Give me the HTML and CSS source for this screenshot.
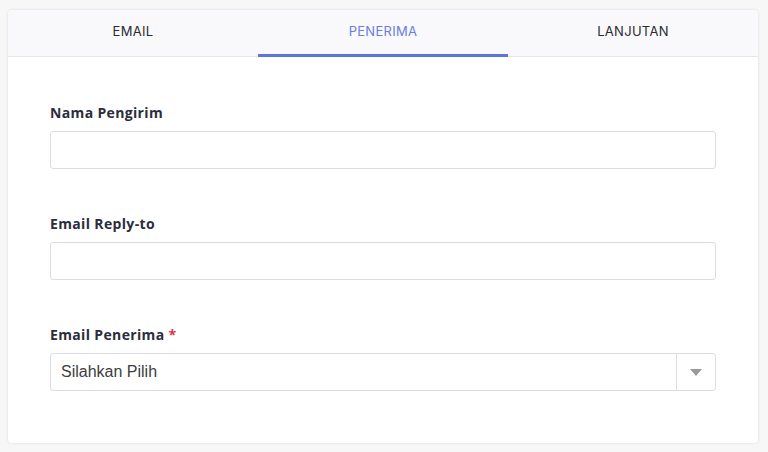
FILE: index.html
```html
<!DOCTYPE html>
<html lang="id">
  <head>
    <meta charset="UTF-8" />
    <meta name="viewport" content="width=device-width, initial-scale=1.0" />
    <title>Pengaturan Email</title>
    <link rel="stylesheet" href="styles.css">
  </head>
  <body>
    <div class="card">
      <!-- tab navigasi -->
      <div class="tabs">
        <div class="tab">EMAIL</div>
        <div class="tab active">PENERIMA</div>
        <div class="tab">LANJUTAN</div>
      </div>
      <!-- isi form penerima -->
      <form class="panel">
        <div class="group">
          <label for="sender">Nama Pengirim</label>
          <input type="text" id="sender" class="input" />
        </div>
        <div class="group">
          <label for="reply">Email Reply-to</label>
          <input type="text" id="reply" class="input" />
        </div>
        <div class="group">
          <label>Email Penerima <span class="req">*</span></label>
          <div class="select">
            <span class="select-text">Silahkan Pilih</span>
            <span class="select-arrow"><i></i></span>
          </div>
        </div>
      </form>
    </div>
  </body>
</html>
```

FILE: styles.css
```css
body {
  margin: 0;
  padding: 10px 10px 9px 8px;
  background-color: #f7f7f7;
  font-family: Inter, "Noto Sans", sans-serif;
}

/* kartu utama */
.card {
  background-color: #fff;
  border-radius: 4px;
  box-shadow: 0 0 3px rgba(0, 0, 0, 0.12);
  overflow: hidden;
}

/* tab */
.tabs {
  display: flex;
  background-color: #f9f9fb;
  border-bottom: 1px solid #e6e6ec;
}

.tab {
  flex: 1;
  height: 47px;
  box-sizing: border-box;
  display: flex;
  justify-content: center;
  align-items: center;
  padding-bottom: 2px;
  font-size: 13px;
  letter-spacing: 0.3px;
  color: #2b2b30;
  border-bottom: 3px solid transparent;
  margin-bottom: -1px;
}

.tab.active {
  color: #6b7de0;
  border-bottom-color: #5f73dc;
}

/* form */
.panel {
  padding: 46px 42px 7px;
}

.group {
  display: flex;
  flex-direction: column;
  margin-bottom: 45px;
}

.group label {
  font-family: "Open Sans", Inter, sans-serif;
  font-size: 14px;
  line-height: 20px;
  font-weight: 700;
  letter-spacing: 0.35px;
  color: #2b2d3c;
  margin-bottom: 8px;
}

.req {
  color: #e0344a;
}

.input {
  height: 38px;
  box-sizing: border-box;
  border: 1px solid #dcdbe8;
  border-radius: 3px;
  outline: none;
  padding: 0 10px;
}

.select {
  height: 38px;
  box-sizing: border-box;
  border: 1px solid #dcdbe8;
  border-radius: 3px;
  display: flex;
  align-items: center;
}

.select-text {
  flex: 1;
  padding-left: 10px;
  font-family: "Liberation Sans", Arial, sans-serif;
  font-size: 16px;
  color: #3d3d40;
}

.select-arrow {
  width: 38px;
  height: 100%;
  border-left: 1px solid #dcdbe8;
  display: flex;
  justify-content: center;
  align-items: center;
}

.select-arrow i {
  width: 0;
  height: 0;
  border-left: 6px solid transparent;
  border-right: 6px solid transparent;
  border-top: 7px solid #9a9a9a;
}
```
